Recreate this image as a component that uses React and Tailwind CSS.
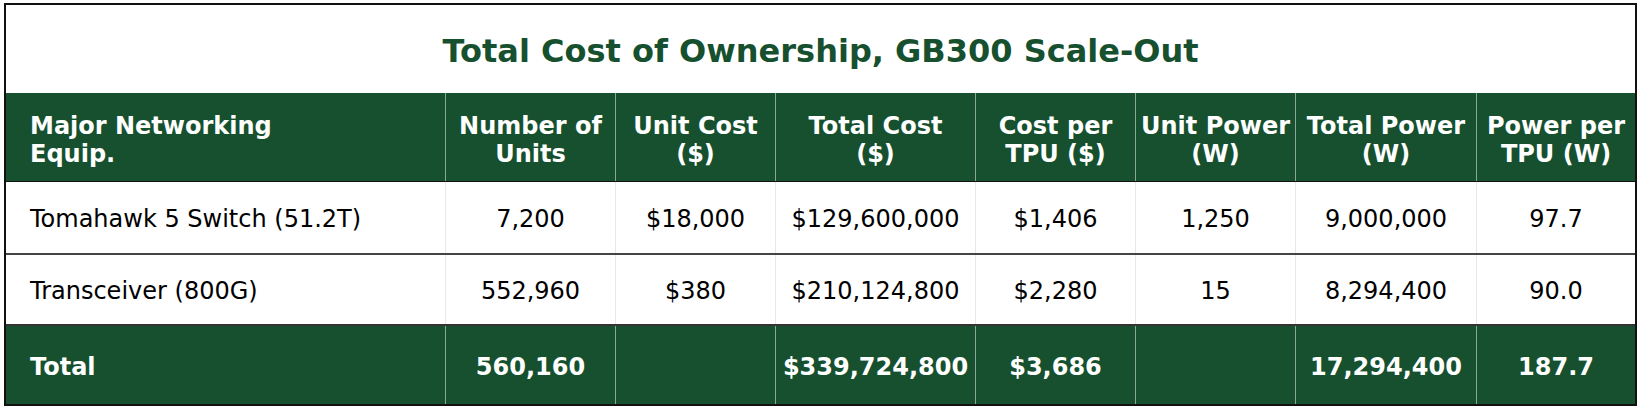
import React from "react";

const headers = [
  ["Major Networking", "Equip."],
  ["Number of", "Units"],
  ["Unit Cost", "($)"],
  ["Total Cost", "($)"],
  ["Cost per", "TPU ($)"],
  ["Unit Power", "(W)"],
  ["Total Power", "(W)"],
  ["Power per", "TPU (W)"],
];

const rows = [
  ["Tomahawk 5 Switch (51.2T)", "7,200", "$18,000", "$129,600,000", "$1,406", "1,250", "9,000,000", "97.7"],
  ["Transceiver (800G)", "552,960", "$380", "$210,124,800", "$2,280", "15", "8,294,400", "90.0"],
];

const total = ["Total", "560,160", "", "$339,724,800", "$3,686", "", "17,294,400", "187.7"];

const grid = "grid grid-cols-[439px_170px_160px_200px_160px_160px_181px_159px]";

export default function App() {
  return (
    <div className="bg-white w-[1642px] h-[411px] pl-[4px] pt-[3px] font-['DejaVu_Sans',sans-serif]">
      <div className="w-[1633px] border-2 border-[#111] bg-white">
        <div className="h-[88px] pt-[4px] flex items-center justify-center text-[32px] font-bold text-[#16502f]">
          Total Cost of Ownership, GB300 Scale-Out
        </div>
        <div className={`${grid} h-[88px] bg-[#16502f] text-white font-bold text-[24px] leading-[28px]`}>
          {headers.map((h, i) => (
            <div
              key={i}
              className={
                i === 0
                  ? "flex flex-col justify-center pl-6 pt-[6px]"
                  : "flex flex-col justify-center items-center pt-[6px] text-center border-l border-[#8ea699] whitespace-nowrap"
              }
            >
              <span>{h[0]}</span>
              <span>{h[1]}</span>
            </div>
          ))}
        </div>
        {rows.map((r, ri) => (
          <div
            key={ri}
            className={`${grid} ${ri === 0 ? "h-[72px] border-t border-[#111]" : "h-[71px] border-t-2 border-[#444]"} text-[24px] text-black`}
          >
            {r.map((c, i) => (
              <div
                key={i}
                className={
                  i === 0
                    ? "flex items-center pl-6 pt-[2px] whitespace-nowrap"
                    : "flex items-center justify-center pt-[2px] border-l border-[#e8e8e8] whitespace-nowrap"
                }
              >
                {c}
              </div>
            ))}
          </div>
        ))}
        <div className={`${grid} h-[80px] border-t-2 border-[#333] bg-[#16502f] text-white font-bold text-[24px]`}>
          {total.map((c, i) => (
            <div
              key={i}
              className={
                i === 0
                  ? "flex items-center pl-6 pt-[4px]"
                  : "flex items-center justify-center pt-[4px] border-l border-[#8ea699] whitespace-nowrap"
              }
            >
              {c}
            </div>
          ))}
        </div>
      </div>
    </div>
  );
}
